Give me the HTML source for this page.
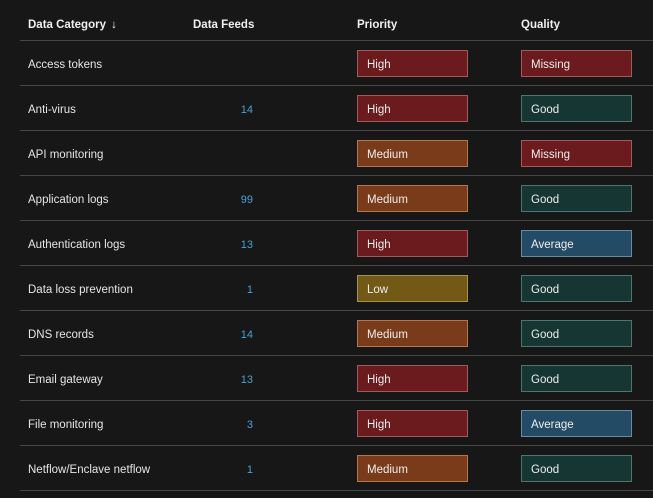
<!DOCTYPE html>
<html><head><style>
html,body{margin:0;padding:0;background:#171717;width:653px;height:498px;overflow:hidden;font-family:"Liberation Sans",Arial,sans-serif;color:#e8e8e8;}
.h{position:absolute;top:19px;font-size:11.5px;font-weight:bold;color:#f0f0f0}
.line{position:absolute;left:20px;right:0;height:1px;background:#474747}
.t{position:absolute;font-size:11.5px;color:#e6e6e6;margin-top:2px}
.n{position:absolute;font-size:11px;color:#4aa0d8;text-align:right;width:40px;left:213px;margin-top:2px}
.b{position:absolute;width:109px;height:25px;border:1px solid;font-size:11.5px;line-height:25px;padding-top:2px;height:23px;text-indent:9px;color:#eee}
.hi{background:#6b1a1d;border-color:#a25a5c}
.me{background:#7a3b1a;border-color:#b27650}
.lo{background:#725a16;border-color:#a8914c}
.go{background:#163633;border-color:#4f7370}
.av{background:#244b66;border-color:#6a8aa0}
</style></head><body>
<div class="h" style="left:28px">Data Category <span style="font-weight:normal;margin-left:2px">&#8595;</span></div>
<div class="h" style="left:193px">Data Feeds</div>
<div class="h" style="left:357px">Priority</div>
<div class="h" style="left:521px">Quality</div>
<div class="line" style="top:40px"></div>

<div class="line" style="top:85px"></div>
<div class="line" style="top:130px"></div>
<div class="line" style="top:175px"></div>
<div class="line" style="top:220px"></div>
<div class="line" style="top:265px"></div>
<div class="line" style="top:310px"></div>
<div class="line" style="top:355px"></div>
<div class="line" style="top:400px"></div>
<div class="line" style="top:445px"></div>
<div class="line" style="top:490px"></div>

<div class="t" style="left:28px;top:57px">Access tokens</div>
<div class="b hi" style="left:357px;top:50px">High</div>
<div class="b hi" style="left:521px;top:50px">Missing</div>

<div class="t" style="left:28px;top:102px">Anti-virus</div>
<div class="n" style="top:102px">14</div>
<div class="b hi" style="left:357px;top:95px">High</div>
<div class="b go" style="left:521px;top:95px">Good</div>

<div class="t" style="left:28px;top:147px">API monitoring</div>
<div class="b me" style="left:357px;top:140px">Medium</div>
<div class="b hi" style="left:521px;top:140px">Missing</div>

<div class="t" style="left:28px;top:192px">Application logs</div>
<div class="n" style="top:192px">99</div>
<div class="b me" style="left:357px;top:185px">Medium</div>
<div class="b go" style="left:521px;top:185px">Good</div>

<div class="t" style="left:28px;top:237px">Authentication logs</div>
<div class="n" style="top:237px">13</div>
<div class="b hi" style="left:357px;top:230px">High</div>
<div class="b av" style="left:521px;top:230px">Average</div>

<div class="t" style="left:28px;top:282px">Data loss prevention</div>
<div class="n" style="top:282px">1</div>
<div class="b lo" style="left:357px;top:275px">Low</div>
<div class="b go" style="left:521px;top:275px">Good</div>

<div class="t" style="left:28px;top:327px">DNS records</div>
<div class="n" style="top:327px">14</div>
<div class="b me" style="left:357px;top:320px">Medium</div>
<div class="b go" style="left:521px;top:320px">Good</div>

<div class="t" style="left:28px;top:372px">Email gateway</div>
<div class="n" style="top:372px">13</div>
<div class="b hi" style="left:357px;top:365px">High</div>
<div class="b go" style="left:521px;top:365px">Good</div>

<div class="t" style="left:28px;top:417px">File monitoring</div>
<div class="n" style="top:417px">3</div>
<div class="b hi" style="left:357px;top:410px">High</div>
<div class="b av" style="left:521px;top:410px">Average</div>

<div class="t" style="left:28px;top:462px">Netflow/Enclave netflow</div>
<div class="n" style="top:462px">1</div>
<div class="b me" style="left:357px;top:455px">Medium</div>
<div class="b go" style="left:521px;top:455px">Good</div>
</body></html>
